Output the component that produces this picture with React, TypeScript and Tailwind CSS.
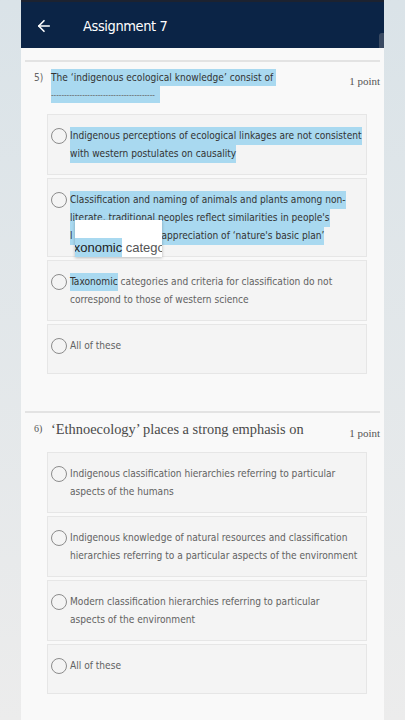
import React from "react";
import { ArrowLeft } from "lucide-react";

const sans = "font-['DejaVu_Sans_Condensed','DejaVu_Sans',sans-serif]";
const serif = "font-['Liberation_Serif','DejaVu_Serif',serif]";
const HL = "bg-[#a9d9f0] inline-block h-[18px] text-[#333]";

type Line = React.ReactNode;

function Radio() {
  return (
    <div className="w-[16px] h-[16px] rounded-full border-[1.5px] border-[#8c8c8c] shrink-0 mt-[1px]" />
  );
}

function Card({ lines, children }: { lines: Line[]; children?: React.ReactNode }) {
  return (
    <div className="relative bg-[#f4f4f4] border border-[#e6e6e6] min-h-[50px] pt-[12px] pb-[11px] pl-[3px] pr-[2px] flex items-start gap-[3px]">
      <Radio />
      <div className={`${sans} text-[10.1px] text-[#626262]`}>
        {lines.map((l, i) => (
          <div key={i} className="h-[18px] leading-[18px] whitespace-nowrap">
            {l}
          </div>
        ))}
      </div>
      {children}
    </div>
  );
}

function Divider() {
  return <div className="mx-[4px] h-[2px] bg-[#e3e3e3]" />;
}

export default function App() {
  return (
    <div className="w-[405px] h-[720px] overflow-hidden bg-linear-to-b from-[#dae3e8] to-[#ececec] flex justify-center">
      <div className="w-[363px] h-full bg-[#f9f9f9] flex flex-col">
        {/* header */}
        <div className="h-[2px] bg-[#1c2230]" />
        <div className="relative h-[46px] bg-[#0b2446] flex items-center">
          <ArrowLeft className="ml-[14px] mt-[2px] text-white" size={18} strokeWidth={2.2} />
          <div className={`${sans} ml-[30px] mt-[3px] text-white text-[14.5px] tracking-[-0.4px]`}>Assignment 7</div>
          <div className="absolute right-0 top-[31px] w-[5px] h-[15px] rounded-tl-[3px] bg-[#3a4a62]" />
        </div>

        <div className="mt-[12px]">
          <Divider />
        </div>

        {/* Q5 heading */}
        <div className="mt-[7px] flex items-start">
          <div className={`${sans} w-[30px] pl-[13px] text-[10.1px] text-[#666] leading-[17px]`}>5)</div>
          <div className={`${sans} flex-1 text-[10.1px] leading-[17px]`}>
            <div className="h-[17px]">
              <span className="bg-[#a9d9f0] inline-block h-[17px] pr-[3px] text-[#333]">
                The ‘indigenous ecological knowledge’ consist of
              </span>
            </div>
            <div className="h-[17px]">
              <span className="bg-[#a9d9f0] inline-block h-[17px] w-[109px] text-[#666] text-[8px] leading-[19px] overflow-hidden whitespace-nowrap">
                ----------------------------------------
              </span>
            </div>
          </div>
          <div className={`${serif} mt-[4px] pr-[4px] text-[11px] text-[#555] leading-[17px]`}>1 point</div>
        </div>

        {/* Q5 options */}
        <div className="mt-[11px] ml-[26px] mr-[17px] flex flex-col gap-[3px]">
          <Card
            lines={[
              <span className={HL}>Indigenous perceptions of ecological linkages are not consistent</span>,
              <span className={HL}>with western postulates on causality</span>,
            ]}
          />
          <Card
            lines={[
              <span className={HL}>Classification and naming of animals and plants among non-</span>,
              <span className={HL}>literate, traditional peoples reflect similarities in people's</span>,
              <span className={HL}>
                l<span className="inline-block w-[89px]" />appreciation of ‘nature's basic plan’
              </span>,
            ]}
          >
            <div className="absolute left-[27px] top-[41px] w-[87px] h-[37px] bg-white shadow-[0_1px_3px_rgba(0,0,0,0.25)] overflow-hidden">
              <div className="mt-[18px] h-[19px] leading-[19px] whitespace-nowrap font-['Liberation_Sans',Arial,sans-serif] text-[13px] text-[#555] -ml-[15px]">
                <span className="text-[#333]">Ta</span>
                <span className="bg-[#a9d9f0] inline-block h-[19px] text-[#222]">xonomic</span> categories
              </div>
            </div>
          </Card>
          <Card
            lines={[
              <span>
                <span className={HL}>Taxonomic</span> categories and criteria for classification do not
              </span>,
              <span>correspond to those of western science</span>,
            ]}
          />
          <Card lines={[<span>All of these</span>]} />
        </div>

        <div className="mt-[37px]">
          <Divider />
        </div>

        {/* Q6 heading */}
        <div className="mt-[6px] flex items-start">
          <div className={`${serif} w-[30px] pl-[13px] text-[10px] text-[#555] leading-[20px]`}>6)</div>
          <div className={`${serif} flex-1 text-[14.4px] text-[#4a4a4a] leading-[20px]`}>
            ‘Ethnoecology’ places a strong emphasis on
          </div>
          <div className={`${serif} mt-[4px] pr-[4px] text-[11px] text-[#555] leading-[20px]`}>1 point</div>
        </div>

        <div className="mt-[9px] ml-[26px] mr-[17px] flex flex-col gap-[3px]">
          <Card
            lines={[
              <span>Indigenous classification hierarchies referring to particular</span>,
              <span>aspects of the humans</span>,
            ]}
          />
          <Card
            lines={[
              <span>Indigenous knowledge of natural resources and classification</span>,
              <span>hierarchies referring to a particular aspects of the environment</span>,
            ]}
          />
          <Card
            lines={[
              <span>Modern classification hierarchies referring to particular</span>,
              <span>aspects of the environment</span>,
            ]}
          />
          <Card lines={[<span>All of these</span>]} />
        </div>
      </div>
    </div>
  );
}
